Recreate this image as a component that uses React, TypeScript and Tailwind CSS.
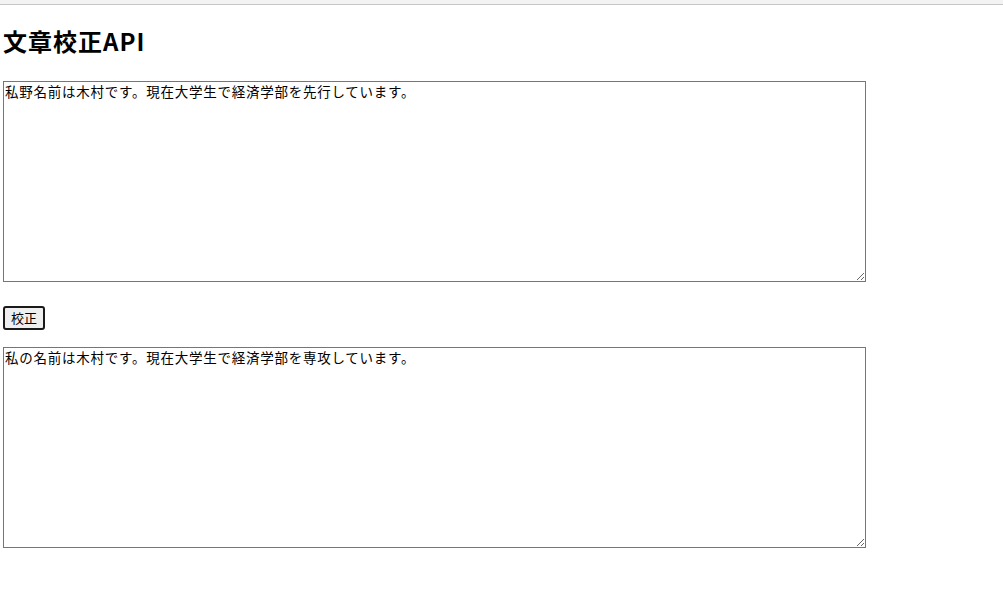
import React, { useState } from "react";

export default function App() {
  const [input, setInput] = useState("私野名前は木村です。現在大学生で経済学部を先行しています。");
  const [output, setOutput] = useState("私の名前は木村です。現在大学生で経済学部を専攻しています。");
  return (
    <div className="min-h-[612px] bg-white text-black font-['Noto_Sans_CJK_JP',sans-serif]">
      <div className="h-[5px] bg-[#f3f3f3] border-b border-[#c6c6c6]" />
      <div className="px-[3px]">
        <h2 className="mt-[22px] text-[24px] leading-[28px] font-bold font-['Noto_Sans_CJK_JP',sans-serif] tracking-[1px]">
          文章校正API
        </h2>
        <textarea
          value={input}
          onChange={(e) => setInput(e.target.value)}
          className="block mt-[26px] w-[863px] h-[201px] border border-[#767676] px-[1px] py-[1px] text-[13.5px] leading-[16px] tracking-[0.75px] font-['Noto_Sans_CJK_JP',monospace] outline-none resize"
        />
        <button
          onClick={() => setOutput(output)}
          className="block mt-[24px] h-[24px] px-[6px] border-2 border-[#1a1a1a] rounded-[3px] bg-[#efefef] text-[13px] leading-[18px] font-['Noto_Sans_CJK_JP',sans-serif]"
        >
          校正
        </button>
        <textarea
          value={output}
          onChange={(e) => setOutput(e.target.value)}
          className="block mt-[17px] w-[863px] h-[201px] border border-[#767676] px-[1px] py-[1px] text-[13.5px] leading-[16px] tracking-[0.75px] font-['Noto_Sans_CJK_JP',monospace] outline-none resize"
        />
      </div>
    </div>
  );
}
